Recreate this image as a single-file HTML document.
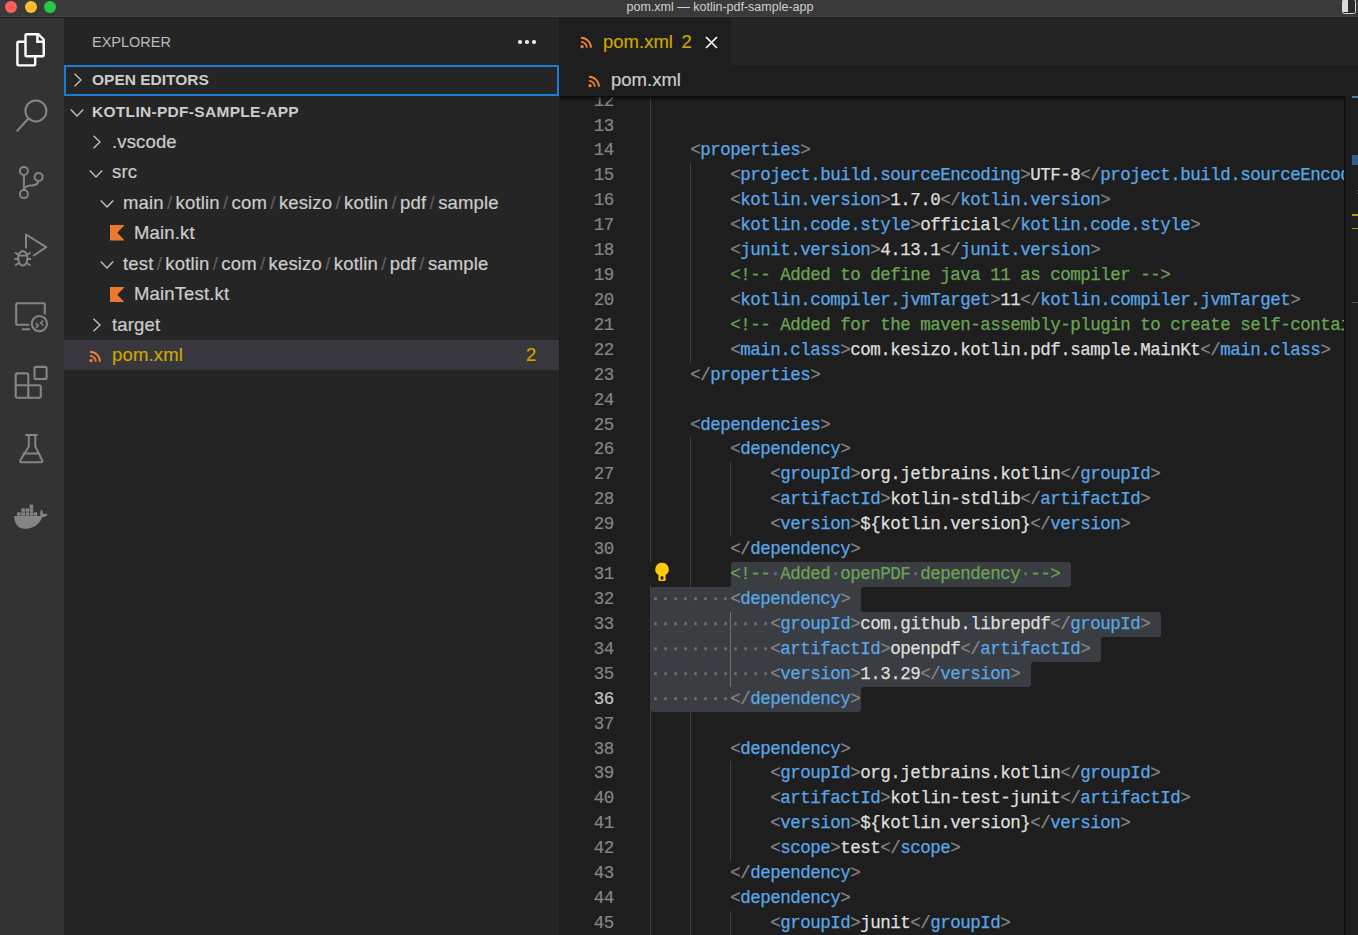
<!DOCTYPE html>
<html><head><meta charset="utf-8">
<style>
*{margin:0;padding:0;box-sizing:border-box}
html,body{width:1358px;height:935px;overflow:hidden;background:#1e1e1e;font-family:"Liberation Sans",sans-serif}
.abs{position:absolute}
#title{position:absolute;left:0;top:0;width:1358px;height:18px;background:#3a3a3a;border-bottom:1.5px solid #202020;box-shadow:inset 0 -1px 0 #444}
#title .t{position:absolute;left:0;width:1440px;top:0;height:15px;line-height:14px;text-align:center;color:#d0d0d0;font-size:12.5px}
.tl{position:absolute;top:1px;width:12px;height:12px;border-radius:50%}
#act{position:absolute;left:0;top:18px;width:64px;height:917px;background:#333333}
#side{position:absolute;left:64px;top:18px;width:495px;height:917px;background:#252526}
#tabs{position:absolute;left:559px;top:18px;width:799px;height:47px;background:#252526}
#tab1{position:absolute;left:0;top:0;width:172px;height:47px;background:#1e1e1e}
#crumb{position:absolute;left:559px;top:65px;width:799px;height:32px;background:#1e1e1e}
#editor{position:absolute;left:559px;top:97px;width:785px;height:838px;background:#1e1e1e;overflow:hidden}
#mini{position:absolute;left:1344px;top:97px;width:14px;height:838px;background:#1e1e1e;border-left:2px solid #121212}
#shadow{position:absolute;left:559px;top:96px;width:785px;height:6px;background:linear-gradient(#000000b0,#00000000)}
.ln{position:absolute;-webkit-text-stroke:0.2px currentColor;left:0;width:54.7px;text-align:right;height:25px;line-height:25px;font-family:"Liberation Mono",monospace;font-size:17.5px;letter-spacing:-0.5px;transform:translateY(0px);color:#858585}
.ln.act{color:#c6c6c6}
.cl{position:absolute;left:91.2px;-webkit-text-stroke:0.25px currentColor;height:25px;line-height:25px;font-family:"Liberation Mono",monospace;font-size:17.5px;letter-spacing:-0.5px;transform:translateY(0px);white-space:pre;color:#d4d4d4}
.br{color:#858585}.tg{color:#5aa6e6}.tx{color:#dedede}.cm{color:#6aa455}
.ws{color:#707274}
.sel{position:absolute;height:25px;background:#3a3d41}
.ig{position:absolute;width:1px;background:#404040}
.ig.on{background:#707070}
.ti{position:absolute;-webkit-text-stroke:0.2px currentColor;height:30px;line-height:30px;font-size:18.5px;color:#cccccc;white-space:nowrap;transform:translateY(-15px);letter-spacing:0.15px}
.sep{color:#5f5f5f;padding:0 3.3px}
.hdr{position:absolute;font-weight:bold;font-size:15.5px;color:#cccccc;height:30px;line-height:30px;transform:translateY(-15px)}
.ic{position:absolute}
</style></head><body>
<div id="title">
  <div class="tl" style="left:5px;background:#fe5f57"></div>
  <div class="tl" style="left:25px;background:#febc2e"></div>
  <div class="tl" style="left:44px;background:#28c840"></div>
  <div class="t">pom.xml — kotlin-pdf-sample-app</div>
  <div class="abs" style="left:1342px;top:-1px;width:14px;height:15px;border:1.6px solid #d8d8d8;border-radius:2.5px;background:#2a2a2a"><div class="abs" style="left:0;top:0;width:4.5px;height:11.8px;background:#d8d8d8"></div></div>
</div>

<div id="act">
  <svg class="ic" style="left:0;top:-18px" width="64" height="80" viewBox="0 0 64 80">
    <path d="M25.5 41.8 H18.7 a1.3 1.3 0 0 0 -1.3 1.3 V64.1 a1.3 1.3 0 0 0 1.3 1.3 H33.9 a1.3 1.3 0 0 0 1.3 -1.3 V56.3" fill="none" stroke="#fff" stroke-width="2.4"/>
    <path d="M26.8 34.3 H38.5 L43.7 39.5 V55 a1.3 1.3 0 0 1 -1.3 1.3 H26.8 a1.3 1.3 0 0 1 -1.3 -1.3 V35.6 a1.3 1.3 0 0 1 1.3 -1.3 Z" fill="none" stroke="#fff" stroke-width="2.4" stroke-linejoin="round"/>
    <path d="M37.4 34.3 V41.8 H43.7" fill="none" stroke="#fff" stroke-width="2.4"/>
  </svg>
  <svg class="ic" style="left:0;top:-18px" width="64" height="560" viewBox="0 0 64 560" fill="none" stroke="#858585" stroke-width="2">
<circle cx="35.9" cy="110.9" r="10.5"/><path d="M28.3 118.8 L16.6 131.4" stroke-width="2.1"/>
<circle cx="23.9" cy="170.9" r="4"/><circle cx="38.6" cy="177" r="4"/><circle cx="23.9" cy="194.1" r="4"/>
<path d="M23.9 174.9 V190.1"/><path d="M38.4 181 C37.8 184.6 35.5 185.6 31 185.6 C27 185.7 24.5 186.6 23.9 190"/>
<path d="M26 247.8 V234.5 L46.2 247.2 L33.8 255.5" stroke-linejoin="round" stroke-linecap="round"/>
<ellipse cx="22.8" cy="258.3" rx="4.6" ry="7.3"/><path d="M18.2 255.6 H27.4 M15.1 252.5 L18.6 255 M30.5 252.5 L27 255 M14.5 259 H18.3 M31.1 259 H27.3 M15.1 265.6 L18.6 263.2 M30.5 265.6 L27 263.2" stroke-width="1.8"/>
<path d="M44.8 314.3 V304.3 a1 1 0 0 0 -1 -1 H17.2 a1 1 0 0 0 -1 1 V323.7 a1 1 0 0 0 1 1 H29.5" stroke-width="2.1"/>
<path d="M22 329.3 H30" stroke-width="2.1"/>
<circle cx="39.4" cy="323.6" r="7.6" stroke-width="2.1"/>
<path d="M35.8 323.2 L38.3 325.6 L35.8 328 M43.3 320.6 L40.6 323 L43.3 325.4" stroke-width="1.6" stroke-linejoin="miter"/>
<path d="M17.2 373.4 H26.8 a1.5 1.5 0 0 1 1.5 1.5 V385.3 H39.3 a1.5 1.5 0 0 1 1.5 1.5 V396.3 a1.5 1.5 0 0 1 -1.5 1.5 H17.2 a1.5 1.5 0 0 1 -1.5 -1.5 V374.9 a1.5 1.5 0 0 1 1.5 -1.5 Z M15.7 385.3 H28.3 V397.8" stroke-width="2.1"/>
<rect x="34.5" y="366.9" width="12.1" height="12.1" rx="1.5" stroke-width="2.1"/>
<path d="M25.3 435 H37.6 M28.8 435 V446.5 L20.3 460.3 a1.2 1.2 0 0 0 1 1.9 H41.2 a1.2 1.2 0 0 0 1 -1.9 L35.3 446.5 V435 M22.7 453.5 H40" stroke-width="2" stroke-linejoin="round"/>
<g fill="#858585" stroke="none">
<path d="M14.2 516 L40.5 516 C40 513.5 40.3 511.2 41.3 509.6 C42.6 510.8 43.2 512.5 42.9 514 C44.4 513.5 46.2 513.8 47.7 514.5 C46.8 516.5 44.5 517.3 42.2 517.2 C39.5 524.2 33 528.8 24.5 528.8 C18 528.8 14.5 523.5 14.2 516 Z"/>
<rect x="17.1" y="512.3" width="3.5" height="3.4"/><rect x="21.3" y="512.3" width="3.6" height="3.4"/><rect x="25.6" y="512.3" width="3.5" height="3.4"/><rect x="29.7" y="512.3" width="3.5" height="3.4"/><rect x="33.8" y="512.3" width="3.5" height="3.4"/>
<rect x="21.3" y="508.4" width="3.6" height="3.4"/><rect x="25.6" y="508.4" width="3.5" height="3.4"/><rect x="29.7" y="508.4" width="3.5" height="3.4"/>
<rect x="29.7" y="504.6" width="3.5" height="3.4"/>
</g>
</svg>
</div>

<div id="side">
  <div class="abs" style="left:28px;top:15px;height:18px;line-height:18px;font-size:14.5px;color:#bbbbbb">EXPLORER</div>
  <div class="abs" style="left:454.4px;top:22.3px;width:3.3px;height:3.3px;border-radius:50%;background:#e6e6e6"></div>
  <div class="abs" style="left:461.4px;top:22.3px;width:3.3px;height:3.3px;border-radius:50%;background:#e6e6e6"></div>
  <div class="abs" style="left:468.4px;top:22.3px;width:3.3px;height:3.3px;border-radius:50%;background:#e6e6e6"></div>
  <div class="abs" style="left:0;top:47px;width:495px;height:31px;border:2px solid #1b7cd6"></div>
</div>

<div class="ic" style="left:72px;top:73px"><svg width="12" height="14" viewBox="0 0 12 14"><path d="M2.5 0.8 L9 7 L2.5 13.2" stroke="#c5c5c5" stroke-width="1.3" fill="none"/></svg></div>
<div class="hdr" style="left:92px;top:80px">OPEN EDITORS</div>
<div class="ic" style="left:70px;top:105px"><svg width="14" height="12" viewBox="0 0 14 12"><path d="M0.8 2.5 L7 9 L13.2 2.5" stroke="#c5c5c5" stroke-width="1.3" fill="none"/></svg></div>
<div class="hdr" style="left:92px;top:112px;letter-spacing:0.3px">KOTLIN-PDF-SAMPLE-APP</div>

<div class="ic" style="left:91px;top:135px"><svg width="12" height="14" viewBox="0 0 12 14"><path d="M2.5 0.8 L9 7 L2.5 13.2" stroke="#c5c5c5" stroke-width="1.3" fill="none"/></svg></div>
<div class="ti" style="top:142px;left:112px">.vscode</div>
<div class="ic" style="left:89px;top:166px"><svg width="14" height="12" viewBox="0 0 14 12"><path d="M0.8 2.5 L7 9 L13.2 2.5" stroke="#c5c5c5" stroke-width="1.3" fill="none"/></svg></div>
<div class="ti" style="top:172px;left:112px">src</div>
<div class="ic" style="left:100px;top:196px"><svg width="14" height="12" viewBox="0 0 14 12"><path d="M0.8 2.5 L7 9 L13.2 2.5" stroke="#c5c5c5" stroke-width="1.3" fill="none"/></svg></div>
<div class="ti" style="top:203px;left:123px">main<span class="sep">/</span>kotlin<span class="sep">/</span>com<span class="sep">/</span>kesizo<span class="sep">/</span>kotlin<span class="sep">/</span>pdf<span class="sep">/</span>sample</div>
<div class="ic" style="left:109.5px;top:225px"><svg width="14.6" height="15.5" viewBox="0 0 14.6 15.5"><path d="M0 0 H14.6 L7.3 7.75 L14.6 15.5 H0 Z" fill="#ec7a2e"/></svg></div>
<div class="ti" style="top:233px;left:134px">Main.kt</div>
<div class="ic" style="left:100px;top:257px"><svg width="14" height="12" viewBox="0 0 14 12"><path d="M0.8 2.5 L7 9 L13.2 2.5" stroke="#c5c5c5" stroke-width="1.3" fill="none"/></svg></div>
<div class="ti" style="top:264px;left:123px">test<span class="sep">/</span>kotlin<span class="sep">/</span>com<span class="sep">/</span>kesizo<span class="sep">/</span>kotlin<span class="sep">/</span>pdf<span class="sep">/</span>sample</div>
<div class="ic" style="left:109.5px;top:286.5px"><svg width="14.6" height="15.5" viewBox="0 0 14.6 15.5"><path d="M0 0 H14.6 L7.3 7.75 L14.6 15.5 H0 Z" fill="#ec7a2e"/></svg></div>
<div class="ti" style="top:294px;left:134px">MainTest.kt</div>
<div class="ic" style="left:91px;top:318px"><svg width="12" height="14" viewBox="0 0 12 14"><path d="M2.5 0.8 L9 7 L2.5 13.2" stroke="#c5c5c5" stroke-width="1.3" fill="none"/></svg></div>
<div class="ti" style="top:325px;left:112px">target</div>
<div class="abs" style="left:64px;top:340px;width:495px;height:30px;background:#37373d"></div>
<div class="ic" style="left:88.6px;top:348.3px"><svg width="12.7" height="12.7" viewBox="0 0 16 16"><circle cx="2.6" cy="13.4" r="2.1" fill="#ee8130"/><path d="M1.2 7.4 A7.4 7.4 0 0 1 8.6 14.8" stroke="#ee8130" stroke-width="2.4" fill="none"/><path d="M1.2 2.2 A12.6 12.6 0 0 1 13.8 14.8" stroke="#ee8130" stroke-width="2.4" fill="none"/></svg></div>
<div class="ti" style="top:355px;left:112px;color:#cca700">pom.xml</div>
<div class="ti" style="top:355px;left:526px;color:#cca700">2</div>

<div id="tabs">
  <div id="tab1">
    <div class="ic" style="left:21.2px;top:16.8px"><svg width="12.7" height="12.7" viewBox="0 0 16 16"><circle cx="2.6" cy="13.4" r="2.1" fill="#ee8130"/><path d="M1.2 7.4 A7.4 7.4 0 0 1 8.6 14.8" stroke="#ee8130" stroke-width="2.4" fill="none"/><path d="M1.2 2.2 A12.6 12.6 0 0 1 13.8 14.8" stroke="#ee8130" stroke-width="2.4" fill="none"/></svg></div>
    <div class="abs" style="left:44px;top:12px;height:24px;line-height:24px;font-size:18.5px;color:#cca700;-webkit-text-stroke:0.2px currentColor">pom.xml <span style="margin-left:3.5px">2</span></div>
    <svg class="ic" style="left:146px;top:17.5px" width="13" height="13" viewBox="0 0 13 13"><path d="M1 1 L12 12 M12 1 L1 12" stroke="#ffffff" stroke-width="1.6"/></svg>
  </div>
</div>
<div id="crumb">
  <div class="ic" style="left:29.4px;top:8.7px"><svg width="12.7" height="12.7" viewBox="0 0 16 16"><circle cx="2.6" cy="13.4" r="2.1" fill="#ee8130"/><path d="M1.2 7.4 A7.4 7.4 0 0 1 8.6 14.8" stroke="#ee8130" stroke-width="2.4" fill="none"/><path d="M1.2 2.2 A12.6 12.6 0 0 1 13.8 14.8" stroke="#ee8130" stroke-width="2.4" fill="none"/></svg></div>
  <div class="abs" style="left:52px;top:3px;height:24px;line-height:24px;font-size:18.5px;color:#cccccc;-webkit-text-stroke:0.2px currentColor">pom.xml</div>
</div>

<div id="editor">
<div class="sel" style="top:465.06px;left:171.5px;width:340px;border-radius:3px 3px 3px 0px"></div>
<div class="sel" style="top:489.98px;left:91.5px;width:210px;border-radius:3px 0px 0px 0px"></div>
<div class="sel" style="top:514.90px;left:91.5px;width:510px;border-radius:0px 3px 3px 0px"></div>
<div class="sel" style="top:539.82px;left:91.5px;width:450px;border-radius:0px 0px 3px 0px"></div>
<div class="sel" style="top:564.74px;left:91.5px;width:380px;border-radius:0px 0px 3px 0px"></div>
<div class="sel" style="top:589.66px;left:91.5px;width:210px;border-radius:0px 0px 3px 3px"></div>
<div class="abs" style="left:168.50px;top:486.98px;width:3px;height:3px;background:#3a3d41"></div>
<div class="abs" style="left:168.50px;top:486.98px;width:3px;height:3px;background:#1e1e1e;border-bottom-right-radius:3px"></div>
<div class="abs" style="left:301.50px;top:489.98px;width:3px;height:3px;background:#3a3d41"></div>
<div class="abs" style="left:301.50px;top:489.98px;width:3px;height:3px;background:#1e1e1e;border-top-left-radius:3px"></div>
<div class="abs" style="left:301.50px;top:511.90px;width:3px;height:3px;background:#3a3d41"></div>
<div class="abs" style="left:301.50px;top:511.90px;width:3px;height:3px;background:#1e1e1e;border-bottom-left-radius:3px"></div>
<div class="abs" style="left:541.50px;top:539.82px;width:3px;height:3px;background:#3a3d41"></div>
<div class="abs" style="left:541.50px;top:539.82px;width:3px;height:3px;background:#1e1e1e;border-top-left-radius:3px"></div>
<div class="abs" style="left:471.50px;top:564.74px;width:3px;height:3px;background:#3a3d41"></div>
<div class="abs" style="left:471.50px;top:564.74px;width:3px;height:3px;background:#1e1e1e;border-top-left-radius:3px"></div>
<div class="abs" style="left:301.50px;top:589.66px;width:3px;height:3px;background:#3a3d41"></div>
<div class="abs" style="left:301.50px;top:589.66px;width:3px;height:3px;background:#1e1e1e;border-top-left-radius:3px"></div>
<div class="ig" style="left:91px;top:-8.42px;height:872.20px"></div>
<div class="ig" style="left:131px;top:66.34px;height:199.36px"></div>
<div class="ig" style="left:131px;top:340.46px;height:523.32px"></div>
<div class="ig" style="left:171px;top:365.38px;height:74.76px"></div>
<div class="ig on" style="left:171px;top:514.90px;height:74.76px"></div>
<div class="ig" style="left:171px;top:664.42px;height:99.68px"></div>
<div class="ig" style="left:171px;top:813.94px;height:49.84px"></div>
<div class="ln" style="top:-8.42px">12</div>
<div class="cl" style="top:-8.42px"></div>
<div class="ln" style="top:16.50px">13</div>
<div class="cl" style="top:16.50px"></div>
<div class="ln" style="top:41.42px">14</div>
<div class="cl" style="top:41.42px">    <span class="br">&lt;</span><span class="tg">properties</span><span class="br">&gt;</span></div>
<div class="ln" style="top:66.34px">15</div>
<div class="cl" style="top:66.34px">        <span class="br">&lt;</span><span class="tg">project.build.sourceEncoding</span><span class="br">&gt;</span><span class="tx">UTF-8</span><span class="br">&lt;/</span><span class="tg">project.build.sourceEncoding</span><span class="br">&gt;</span></div>
<div class="ln" style="top:91.26px">16</div>
<div class="cl" style="top:91.26px">        <span class="br">&lt;</span><span class="tg">kotlin.version</span><span class="br">&gt;</span><span class="tx">1.7.0</span><span class="br">&lt;/</span><span class="tg">kotlin.version</span><span class="br">&gt;</span></div>
<div class="ln" style="top:116.18px">17</div>
<div class="cl" style="top:116.18px">        <span class="br">&lt;</span><span class="tg">kotlin.code.style</span><span class="br">&gt;</span><span class="tx">official</span><span class="br">&lt;/</span><span class="tg">kotlin.code.style</span><span class="br">&gt;</span></div>
<div class="ln" style="top:141.10px">18</div>
<div class="cl" style="top:141.10px">        <span class="br">&lt;</span><span class="tg">junit.version</span><span class="br">&gt;</span><span class="tx">4.13.1</span><span class="br">&lt;/</span><span class="tg">junit.version</span><span class="br">&gt;</span></div>
<div class="ln" style="top:166.02px">19</div>
<div class="cl" style="top:166.02px">        <span class="cm">&lt;!-- Added to define java 11 as compiler --&gt;</span></div>
<div class="ln" style="top:190.94px">20</div>
<div class="cl" style="top:190.94px">        <span class="br">&lt;</span><span class="tg">kotlin.compiler.jvmTarget</span><span class="br">&gt;</span><span class="tx">11</span><span class="br">&lt;/</span><span class="tg">kotlin.compiler.jvmTarget</span><span class="br">&gt;</span></div>
<div class="ln" style="top:215.86px">21</div>
<div class="cl" style="top:215.86px">        <span class="cm">&lt;!-- Added for the maven-assembly-plugin to create self-contained jar --&gt;</span></div>
<div class="ln" style="top:240.78px">22</div>
<div class="cl" style="top:240.78px">        <span class="br">&lt;</span><span class="tg">main.class</span><span class="br">&gt;</span><span class="tx">com.kesizo.kotlin.pdf.sample.MainKt</span><span class="br">&lt;/</span><span class="tg">main.class</span><span class="br">&gt;</span></div>
<div class="ln" style="top:265.70px">23</div>
<div class="cl" style="top:265.70px">    <span class="br">&lt;/</span><span class="tg">properties</span><span class="br">&gt;</span></div>
<div class="ln" style="top:290.62px">24</div>
<div class="cl" style="top:290.62px"></div>
<div class="ln" style="top:315.54px">25</div>
<div class="cl" style="top:315.54px">    <span class="br">&lt;</span><span class="tg">dependencies</span><span class="br">&gt;</span></div>
<div class="ln" style="top:340.46px">26</div>
<div class="cl" style="top:340.46px">        <span class="br">&lt;</span><span class="tg">dependency</span><span class="br">&gt;</span></div>
<div class="ln" style="top:365.38px">27</div>
<div class="cl" style="top:365.38px">            <span class="br">&lt;</span><span class="tg">groupId</span><span class="br">&gt;</span><span class="tx">org.jetbrains.kotlin</span><span class="br">&lt;/</span><span class="tg">groupId</span><span class="br">&gt;</span></div>
<div class="ln" style="top:390.30px">28</div>
<div class="cl" style="top:390.30px">            <span class="br">&lt;</span><span class="tg">artifactId</span><span class="br">&gt;</span><span class="tx">kotlin-stdlib</span><span class="br">&lt;/</span><span class="tg">artifactId</span><span class="br">&gt;</span></div>
<div class="ln" style="top:415.22px">29</div>
<div class="cl" style="top:415.22px">            <span class="br">&lt;</span><span class="tg">version</span><span class="br">&gt;</span><span class="tx">${kotlin.version}</span><span class="br">&lt;/</span><span class="tg">version</span><span class="br">&gt;</span></div>
<div class="ln" style="top:440.14px">30</div>
<div class="cl" style="top:440.14px">        <span class="br">&lt;/</span><span class="tg">dependency</span><span class="br">&gt;</span></div>
<div class="ln" style="top:465.06px">31</div>
<div class="cl" style="top:465.06px">        <span class="cm">&lt;!--<span class="ws">·</span>Added<span class="ws">·</span>openPDF<span class="ws">·</span>dependency<span class="ws">·</span>--&gt;</span></div>
<div class="ln" style="top:489.98px">32</div>
<div class="cl" style="top:489.98px"><span class="ws">········</span><span class="br">&lt;</span><span class="tg">dependency</span><span class="br">&gt;</span></div>
<div class="ln" style="top:514.90px">33</div>
<div class="cl" style="top:514.90px"><span class="ws">············</span><span class="br">&lt;</span><span class="tg">groupId</span><span class="br">&gt;</span><span class="tx">com.github.librepdf</span><span class="br">&lt;/</span><span class="tg">groupId</span><span class="br">&gt;</span></div>
<div class="ln" style="top:539.82px">34</div>
<div class="cl" style="top:539.82px"><span class="ws">············</span><span class="br">&lt;</span><span class="tg">artifactId</span><span class="br">&gt;</span><span class="tx">openpdf</span><span class="br">&lt;/</span><span class="tg">artifactId</span><span class="br">&gt;</span></div>
<div class="ln" style="top:564.74px">35</div>
<div class="cl" style="top:564.74px"><span class="ws">············</span><span class="br">&lt;</span><span class="tg">version</span><span class="br">&gt;</span><span class="tx">1.3.29</span><span class="br">&lt;/</span><span class="tg">version</span><span class="br">&gt;</span></div>
<div class="ln act" style="top:589.66px">36</div>
<div class="cl" style="top:589.66px"><span class="ws">········</span><span class="br">&lt;/</span><span class="tg">dependency</span><span class="br">&gt;</span></div>
<div class="ln" style="top:614.58px">37</div>
<div class="cl" style="top:614.58px"></div>
<div class="ln" style="top:639.50px">38</div>
<div class="cl" style="top:639.50px">        <span class="br">&lt;</span><span class="tg">dependency</span><span class="br">&gt;</span></div>
<div class="ln" style="top:664.42px">39</div>
<div class="cl" style="top:664.42px">            <span class="br">&lt;</span><span class="tg">groupId</span><span class="br">&gt;</span><span class="tx">org.jetbrains.kotlin</span><span class="br">&lt;/</span><span class="tg">groupId</span><span class="br">&gt;</span></div>
<div class="ln" style="top:689.34px">40</div>
<div class="cl" style="top:689.34px">            <span class="br">&lt;</span><span class="tg">artifactId</span><span class="br">&gt;</span><span class="tx">kotlin-test-junit</span><span class="br">&lt;/</span><span class="tg">artifactId</span><span class="br">&gt;</span></div>
<div class="ln" style="top:714.26px">41</div>
<div class="cl" style="top:714.26px">            <span class="br">&lt;</span><span class="tg">version</span><span class="br">&gt;</span><span class="tx">${kotlin.version}</span><span class="br">&lt;/</span><span class="tg">version</span><span class="br">&gt;</span></div>
<div class="ln" style="top:739.18px">42</div>
<div class="cl" style="top:739.18px">            <span class="br">&lt;</span><span class="tg">scope</span><span class="br">&gt;</span><span class="tx">test</span><span class="br">&lt;/</span><span class="tg">scope</span><span class="br">&gt;</span></div>
<div class="ln" style="top:764.10px">43</div>
<div class="cl" style="top:764.10px">        <span class="br">&lt;/</span><span class="tg">dependency</span><span class="br">&gt;</span></div>
<div class="ln" style="top:789.02px">44</div>
<div class="cl" style="top:789.02px">        <span class="br">&lt;</span><span class="tg">dependency</span><span class="br">&gt;</span></div>
<div class="ln" style="top:813.94px">45</div>
<div class="cl" style="top:813.94px">            <span class="br">&lt;</span><span class="tg">groupId</span><span class="br">&gt;</span><span class="tx">junit</span><span class="br">&lt;/</span><span class="tg">groupId</span><span class="br">&gt;</span></div>
<div class="ln" style="top:838.86px">46</div>
<div class="cl" style="top:838.86px">            <span class="br">&lt;</span><span class="tg">artifactId</span><span class="br">&gt;</span><span class="tx">junit</span><span class="br">&lt;/</span><span class="tg">artifactId</span><span class="br">&gt;</span></div>
  <div class="abs" style="left:90px;top:465px;width:3px;height:22.5px;background:#1e1e1e"></div>
  <svg class="ic" style="left:95px;top:465px" width="16" height="20" viewBox="0 0 16 20"><path d="M8 0.8a6.6 6.6 0 0 0 -3.6 12.2 V18 a1 1 0 0 0 1 1 h5.2 a1 1 0 0 0 1 -1 V13 A6.6 6.6 0 0 0 8 0.8z" fill="#ffcc00"/><rect x="6.6" y="14.2" width="2.8" height="3.3" rx="0.6" fill="#1e1e1e"/></svg>
</div>
<div id="mini"><div class="abs" style="left:6px;top:-1px;width:8px;height:2px;background:#4d7aa6"></div>
<div class="abs" style="left:12px;top:3px;width:2px;height:1px;background:#3d5a78"></div>
<div class="abs" style="left:12px;top:9px;width:2px;height:1px;background:#3d5a78"></div>
<div class="abs" style="left:12px;top:14px;width:2px;height:1px;background:#3d5a78"></div>
<div class="abs" style="left:12px;top:23px;width:2px;height:1px;background:#3d5a78"></div>
<div class="abs" style="left:12px;top:31px;width:2px;height:1px;background:#555"></div>
<div class="abs" style="left:6px;top:57.5px;width:8px;height:10.5px;background:#2e5f90"></div>
<div class="abs" style="left:11px;top:93px;width:3px;height:1px;background:#555"></div>
<div class="abs" style="left:11px;top:96px;width:3px;height:1px;background:#3d5a78"></div>
<div class="abs" style="left:6px;top:117px;width:8px;height:1.5px;background:#b8960c"></div>
<div class="abs" style="left:6px;top:130.5px;width:8px;height:1.5px;background:#b8960c"></div>
<div class="abs" style="left:6px;top:205px;width:8px;height:1px;background:#3a5a7a"></div>
</div>
<div id="shadow"></div>
<div class="abs" style="left:559px;top:18px;width:1px;height:917px;background:#1b1b1b"></div>
</body></html>
